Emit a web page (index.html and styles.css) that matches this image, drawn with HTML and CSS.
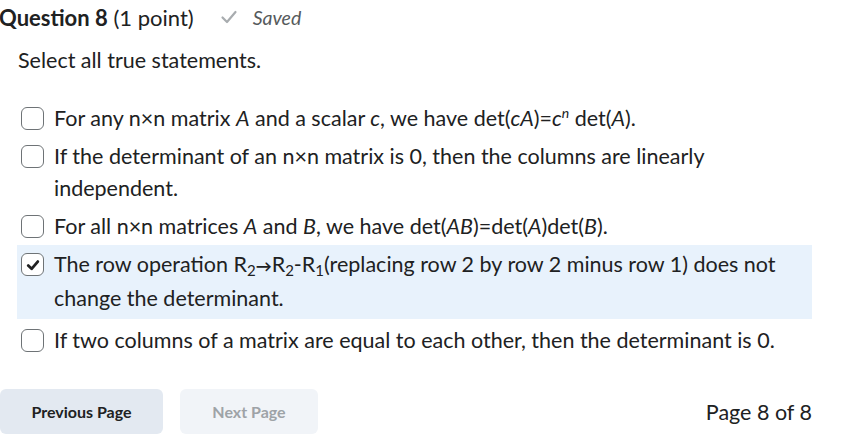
FILE: index.html
```html
<!DOCTYPE html>
<html lang="en">
  <head>
    <meta charset="UTF-8" />
    <meta name="viewport" content="width=device-width, initial-scale=1.0" />
    <title>Question 8</title>
    <link rel="stylesheet" href="styles.css">
  </head>
  <body>
    <div class="q-head">
      <span class="q-title"><b>Question 8</b> (1 point)</span>
      <span class="q-saved">
        <svg class="saved-icon" viewBox="0 0 18 18" width="18" height="18"><path d="M2.5 9.5 L7 14 L15.5 4" fill="none" stroke="#a8acaf" stroke-width="2.2" stroke-linecap="round" stroke-linejoin="round"/></svg>
        <i>Saved</i>
      </span>
    </div>

    <div class="q-body">
      <p class="q-text">Select all true statements.</p>

      <div class="opt">
        <span class="box"></span>
        <span class="opt-text">For any n×n matrix <i>A</i> and a scalar <i>c</i>, we have det(<i>cA</i>)=<i>c<sup>n</sup></i> det(<i>A</i>).</span>
      </div>
      <div class="opt">
        <span class="box"></span>
        <span class="opt-text">If the determinant of an n×n matrix is 0, then the columns are linearly independent.</span>
      </div>
      <div class="opt">
        <span class="box"></span>
        <span class="opt-text">For all n×n matrices <i>A</i> and <i>B</i>, we have det(<i>AB</i>)=det(<i>A</i>)det(<i>B</i>).</span>
      </div>
      <div class="opt opt-on">
        <span class="box box-on">
          <svg viewBox="0 0 16 16" width="16" height="16"><path d="M3.2 8.6 L6.6 11.8 L12.8 4.6" fill="none" stroke="#202122" stroke-width="2.8" stroke-linecap="round" stroke-linejoin="round"/></svg>
        </span>
        <span class="opt-text">The row operation R<sub>2</sub><span class="arrow">→</span>R<sub>2</sub>-R<sub>1</sub>(replacing row 2 by row 2 minus row 1) does not change the determinant.</span>
      </div>
      <div class="opt">
        <span class="box"></span>
        <span class="opt-text">If two columns of a matrix are equal to each other, then the determinant is 0.</span>
      </div>
    </div>

    <div class="q-foot">
      <div class="nav">
        <button class="nav-but">Previous Page</button>
        <button class="nav-but nav-off">Next Page</button>
      </div>
      <span class="page-count">Page 8 of 8</span>
    </div>
  </body>
</html>
```

FILE: styles.css
```css
body{
  margin: 0;
  background-color: white;
  color: #202122;
  font-family: Lato, "Noto Sans", sans-serif;
  width: 812px;
}
.q-head{
  display: flex;
  align-items: center;
  height: 34px;
}
.q-title{
  font-size: 22px;
  margin-left: -1px;
}
.q-saved{
  display: flex;
  align-items: center;
  margin-left: 26px;
  color: #565a5c;
  font-size: 19.5px;
}
.saved-icon{
  margin-right: 15px;
}
.q-body{
  margin-left: 17px;
}
.q-text{
  font-size: 21.5px;
  margin: 13px 0 26px 1px;
}
.opt{
  display: flex;
  align-items: flex-start;
  padding: 3px 0 3px 4px;
  font-size: 21.5px;
  line-height: 32px;
}
.opt-on{
  background-color: #e8f2fc;
  padding-bottom: 5px;
  margin-bottom: 2px;
}
.box{
  flex: none;
  width: 21px;
  height: 21px;
  margin-top: 5px;
  margin-right: 10px;
  border: 1.5px solid #6e7376;
  border-radius: 6px;
  background-color: white;
  display: flex;
  align-items: center;
  justify-content: center;
}
.opt-text sub{
  font-size: 15px;
  line-height: 0;
  vertical-align: -4px;
}
.opt-text sup{
  font-size: 14px;
  line-height: 0;
}
.arrow{
  font-size: 16px;
  font-weight: bold;
}
.q-foot{
  display: flex;
  align-items: center;
  justify-content: space-between;
  margin-top: 30px;
}
.nav{
  display: flex;
  gap: 17px;
}
.nav-but{
  font-family: Lato, "Noto Sans", sans-serif;
  font-weight: bold;
  font-size: 16px;
  color: #202122;
  background-color: #e3e9f1;
  border: none;
  border-radius: 6px;
  height: 45px;
  width: 163px;
}
.nav-off{
  width: 138px;
  color: #9ea3a7;
  background-color: #f1f4f8;
}
.page-count{
  font-size: 21.5px;
}
```
